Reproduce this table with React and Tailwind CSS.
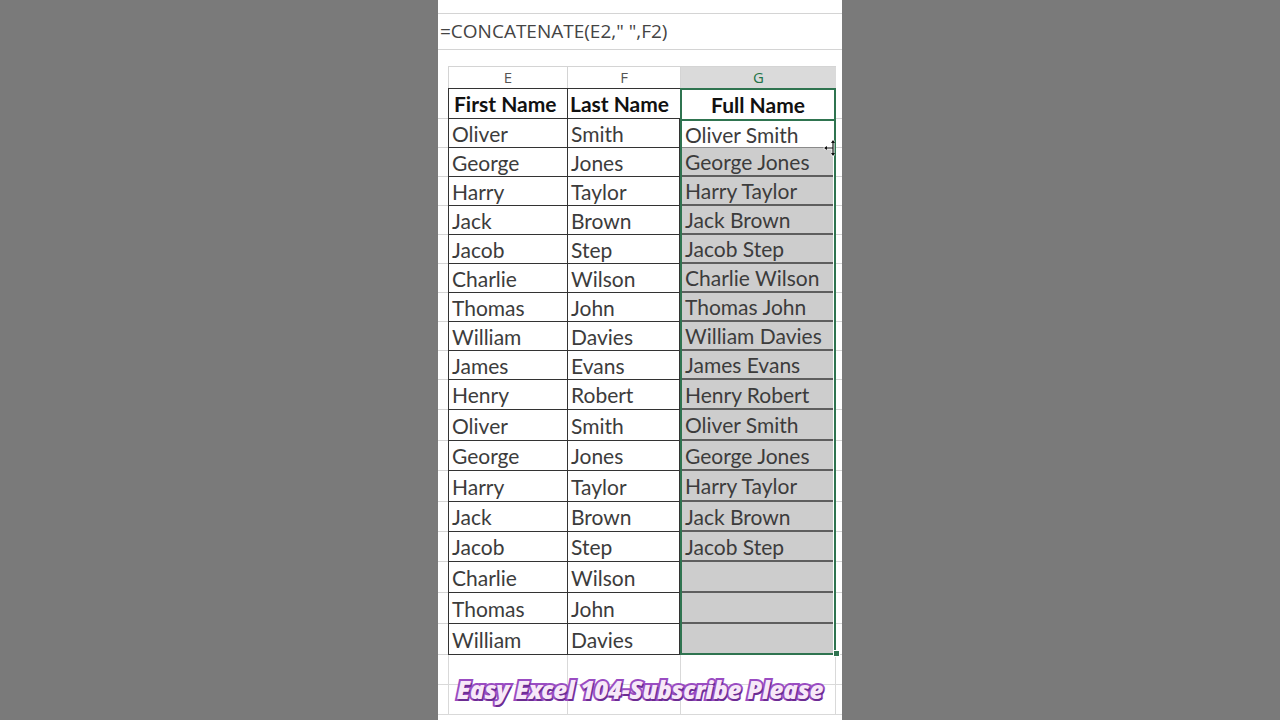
import React from "react";

const rows = [
  ["Oliver", "Smith", "Oliver Smith", 29],
  ["George", "Jones", "George Jones", 29],
  ["Harry", "Taylor", "Harry Taylor", 29],
  ["Jack", "Brown", "Jack Brown", 29],
  ["Jacob", "Step", "Jacob Step", 29],
  ["Charlie", "Wilson", "Charlie Wilson", 29],
  ["Thomas", "John", "Thomas John", 29],
  ["William", "Davies", "William Davies", 29],
  ["James", "Evans", "James Evans", 29],
  ["Henry", "Robert", "Henry Robert", 30],
  ["Oliver", "Smith", "Oliver Smith", 31],
  ["George", "Jones", "George Jones", 30],
  ["Harry", "Taylor", "Harry Taylor", 31],
  ["Jack", "Brown", "Jack Brown", 30],
  ["Jacob", "Step", "Jacob Step", 30],
  ["Charlie", "Wilson", "", 31],
  ["Thomas", "John", "", 31],
  ["William", "Davies", "", 31],
];

const grid = "grid grid-cols-[10px_119px_113px_156px_6px] overflow-hidden";

function MoveCursor() {
  return (
    <svg width="16" height="18" viewBox="0 0 16 18" className="absolute left-[384px] top-[139px]">
      <g stroke="#fff" strokeWidth="3" fill="none" strokeLinecap="round">
        <path d="M11 2 V16 M3 9 H11" />
      </g>
      <g stroke="#111" strokeWidth="1.2" fill="none">
        <path d="M11 2 V16 M3 9 H11" />
      </g>
      <path d="M11 1 L9 4 H13 Z M11 17 L9 14 H13 Z M2 9 L5 7 V11 Z" fill="#111" />
    </svg>
  );
}

export default function App() {
  return (
    <div className="w-full h-[720px] bg-[#7a7a7a] flex justify-center overflow-hidden">
      <div className="relative w-[404px] h-[720px] bg-white font-['Lato',sans-serif] text-[21px] leading-none text-[#3c3c3c]">
        <div className="h-[14px] border-b border-[#d4d4d4]" />
        <div className="h-[36px] border-b border-[#d4d4d4] pl-[2px] flex items-center font-['Open_Sans',sans-serif] text-[19px] text-[#444]">
          =CONCATENATE(E2," ",F2)
        </div>
        <div className="h-[16px]" />

        {/* column letters */}
        <div className={`${grid} h-[22px] text-[15px] font-['Open_Sans',sans-serif]`}>
          <div />
          <div className="border-l border-t border-[#d4d4d4] flex items-center justify-center text-[#555]">E</div>
          <div className="border-l border-t border-[#d4d4d4] flex items-center justify-center text-[#555]">F</div>
          <div className="bg-[#dadada] border-l border-t border-[#d4d4d4] flex items-center justify-center text-[#217346]">G</div>
          <div />
        </div>

        {/* header */}
        <div className={`${grid} h-[31px] font-bold text-[#111]`}>
          <div className="border-b border-[#d4d4d4]" />
          <div className="border-l border-t border-b border-[#333] pl-[5px] flex items-center">First Name</div>
          <div className="border-l border-t border-b border-[#333] pl-[2px] flex items-center">Last Name</div>
          <div className="border-2 border-b-0 border-[#2f7450] flex items-center justify-center">Full Name</div>
          <div className="border-b border-[#d4d4d4]" />
        </div>

        {rows.map(([first, last, full, h], i) => {
          const isFirst = i === 0;
          const isLast = i === rows.length - 1;
          return (
            <div key={i} className={grid} style={{ height: h }}>
              <div className="border-b border-[#d4d4d4]" />
              <div className="border-l border-b border-[#333] pl-[3px] flex items-center">{first}</div>
              <div className="border-l border-r border-b border-[#333] pl-[3px] flex items-center">{last}</div>
              <div
                className={`flex border-l-2 border-r-2 border-[#2f7450] ${isFirst ? "border-t-2" : ""} ${isLast ? "border-b-2" : ""}`}
              >
                <div
                  className={`flex-1 pl-[3px] flex items-center ${isFirst ? "bg-white border-b border-[#8a8a8a]" : "bg-[#cdcdcd] mr-[1px]"} ${!isFirst && !isLast ? "border-b-2 border-[#5e5e5e]" : ""}`}
                >
                  {full}
                </div>
              </div>
              <div className="border-b border-[#d4d4d4]" />
            </div>
          );
        })}

        {/* empty grid below */}
        {[0, 1].map((k) => (
          <div key={k} className={`${grid} h-[30px]`}>
            <div className="border-b border-[#d9d9d9]" />
            <div className="border-l border-b border-[#d9d9d9]" />
            <div className="border-l border-b border-[#d9d9d9]" />
            <div className="border-l border-r border-b border-[#d9d9d9]" />
            <div className="border-b border-[#d9d9d9]" />
          </div>
        ))}

        <div className="absolute left-[395px] top-[650px] w-[7px] h-[7px] bg-[#2f7450] border border-white" />
        <MoveCursor />

        <div className="absolute left-0 right-0 top-[676px] text-center font-['Noto_Sans',sans-serif] font-black italic text-[24px] leading-[28px] tracking-[-0.2px] text-[#f7e8f8] [-webkit-text-stroke:4px_#9a4cc2] [paint-order:stroke_fill] [text-shadow:1px_2px_0_#6b2c91]">
          Easy Excel 104-Subscribe Please
        </div>
      </div>
    </div>
  );
}
